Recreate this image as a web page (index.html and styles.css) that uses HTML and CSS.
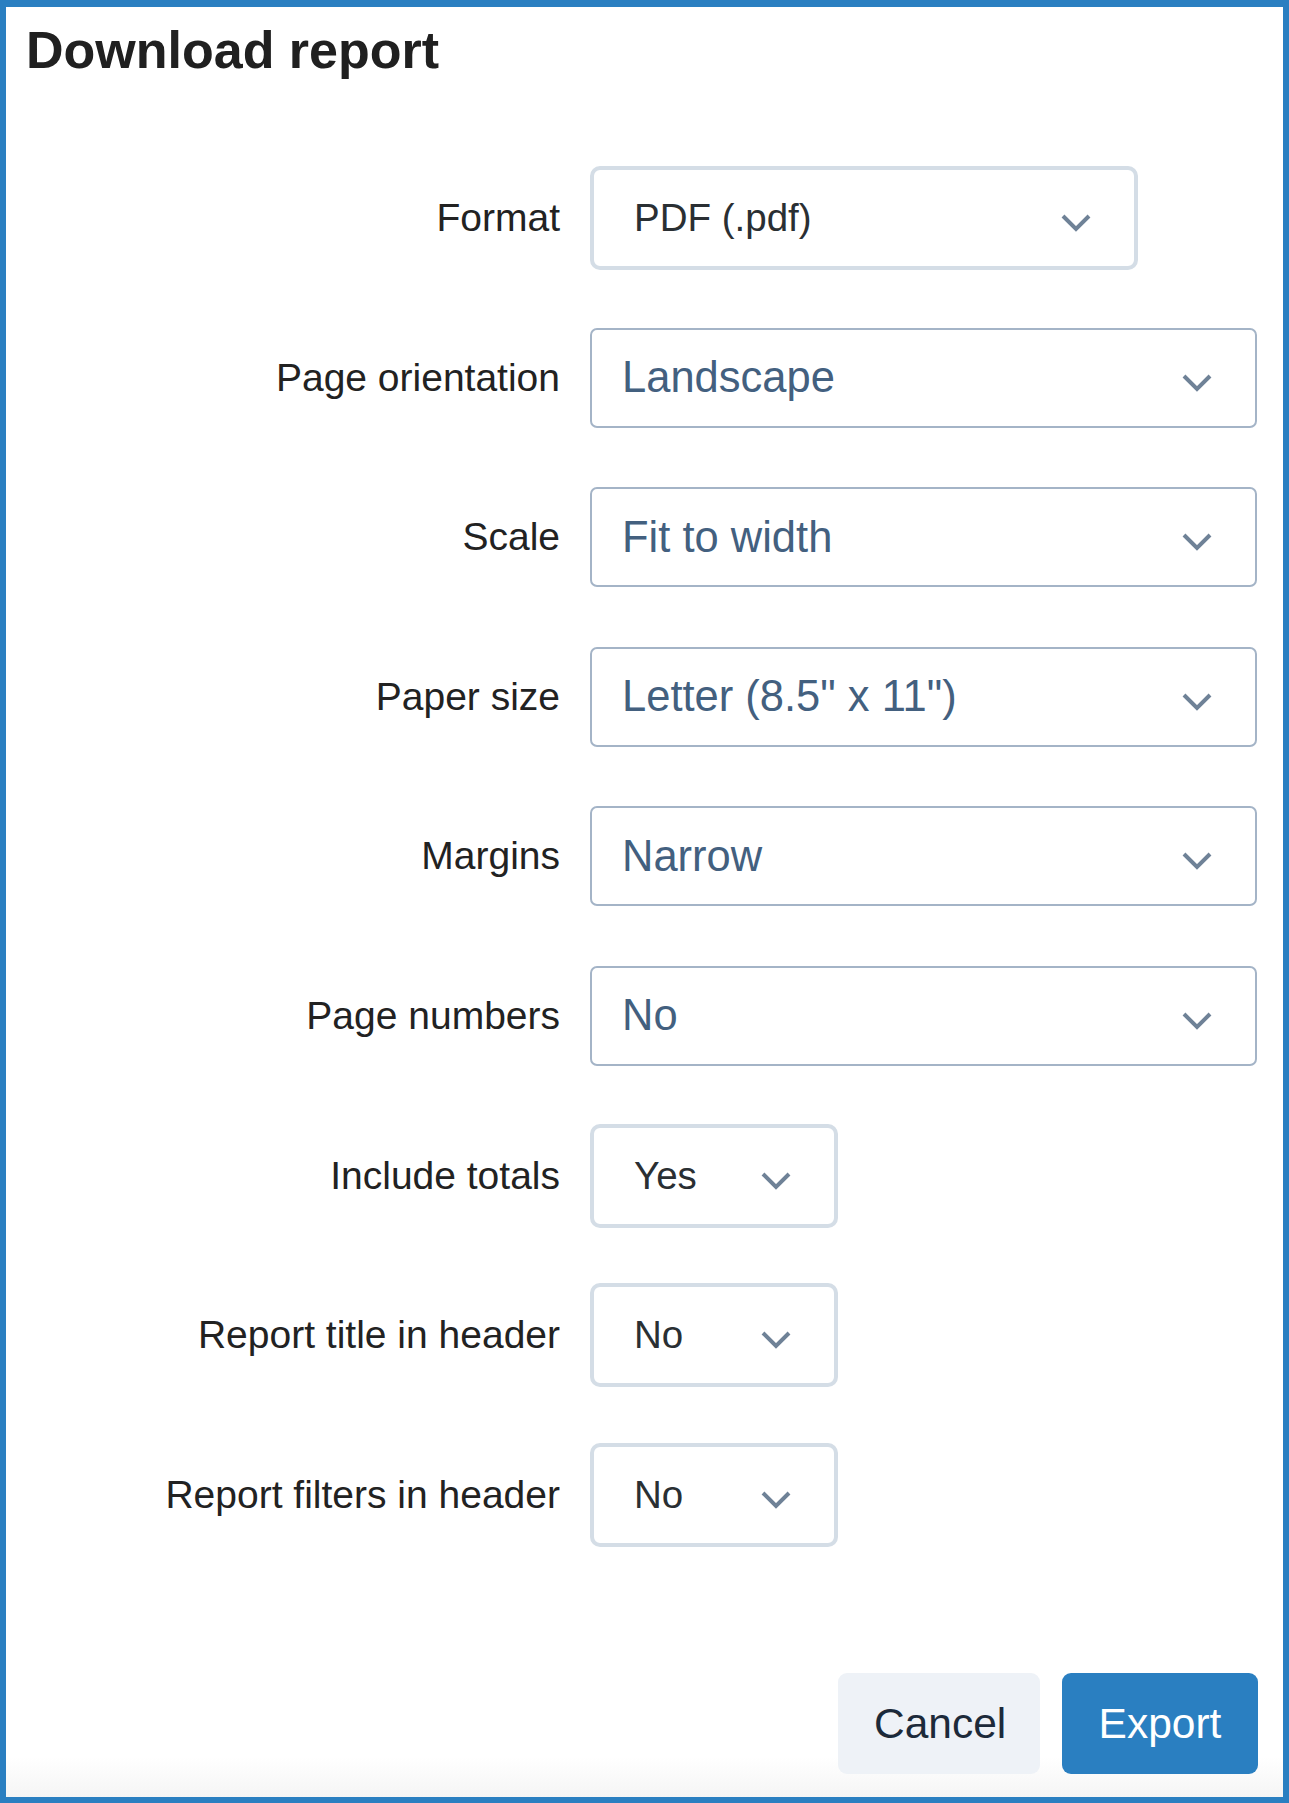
FILE: index.html
```html
<!DOCTYPE html>
<html lang="en">
<head>
    <meta charset="UTF-8">
    <meta name="viewport" content="width=device-width, initial-scale=1.0">
    <title>Download report</title>
    <link rel="stylesheet" href="styles.css">
</head>
<body>
    <div class="dialog">
        <h1 class="title">Download report</h1>
        <div class="form">
            <div class="label">Format</div>
            <div class="select select-plain select-format"><span class="value">PDF (.pdf)</span><svg class="chevron" viewBox="0 0 30 20"><polyline points="2,3 15,16 28,3"/></svg></div>

            <div class="label">Page orientation</div>
            <div class="select select-wide"><span class="value">Landscape</span><svg class="chevron" viewBox="0 0 30 20"><polyline points="2,3 15,16 28,3"/></svg></div>

            <div class="label">Scale</div>
            <div class="select select-wide"><span class="value">Fit to width</span><svg class="chevron" viewBox="0 0 30 20"><polyline points="2,3 15,16 28,3"/></svg></div>

            <div class="label">Paper size</div>
            <div class="select select-wide"><span class="value">Letter (8.5" x 11")</span><svg class="chevron" viewBox="0 0 30 20"><polyline points="2,3 15,16 28,3"/></svg></div>

            <div class="label">Margins</div>
            <div class="select select-wide"><span class="value">Narrow</span><svg class="chevron" viewBox="0 0 30 20"><polyline points="2,3 15,16 28,3"/></svg></div>

            <div class="label">Page numbers</div>
            <div class="select select-wide"><span class="value">No</span><svg class="chevron" viewBox="0 0 30 20"><polyline points="2,3 15,16 28,3"/></svg></div>

            <div class="label">Include totals</div>
            <div class="select select-plain select-small"><span class="value">Yes</span><svg class="chevron" viewBox="0 0 30 20"><polyline points="2,3 15,16 28,3"/></svg></div>

            <div class="label">Report title in header</div>
            <div class="select select-plain select-small"><span class="value">No</span><svg class="chevron" viewBox="0 0 30 20"><polyline points="2,3 15,16 28,3"/></svg></div>

            <div class="label">Report filters in header</div>
            <div class="select select-plain select-small"><span class="value">No</span><svg class="chevron" viewBox="0 0 30 20"><polyline points="2,3 15,16 28,3"/></svg></div>
        </div>
        <div class="footer">
            <button class="btn btn-cancel">Cancel</button>
            <button class="btn btn-export">Export</button>
        </div>
    </div>
</body>
</html>
```

FILE: styles.css
```css
html, body { margin: 0; padding: 0; }
body { font-family: 'Liberation Sans', Arial, sans-serif; color: #222; background: #fff; }

.dialog { box-sizing: border-box; width: 1289px; height: 1803px; border: 6px solid #2a7fc1; border-top-width: 7px; display: flex; flex-direction: column; background: linear-gradient(#fff calc(100% - 40px), #f5f5f5); }

.title { margin: 0; padding: 13px 0 0 20px; font-size: 52px; line-height: 60px; font-weight: bold; color: #202020; }

.form { margin-top: 86px; display: grid; grid-template-columns: 554px auto; grid-auto-rows: 104px; column-gap: 30px; row-gap: 55.6px; padding-right: 26px; align-items: center; }
.label { font-size: 39px; text-align: right; color: #222; }

.select { box-sizing: border-box; display: flex; align-items: center; justify-content: space-between; background: #fff; }
.select .value { white-space: nowrap; }
.chevron { width: 30px; height: 20px; margin-top: 10px; flex: none; }
.chevron polyline { fill: none; stroke: #6f8297; stroke-width: 4; }

.select-plain { height: 104px; border: 4px solid #d4dde6; border-radius: 10px; padding: 0 43px 0 40px; font-size: 38.5px; color: #2a2f33; }
.select-format { width: 548px; }
.select-small { width: 248px; }
.select-wide { height: 100px; border: 2px solid #a4b4c7; border-radius: 7px; padding: 0 43px 0 30px; font-size: 43.5px; color: #43607f; }

.footer { margin-top: auto; display: flex; justify-content: flex-end; gap: 22px; padding: 0 25px 23px 0; }
.btn { font-family: 'Liberation Sans', Arial, sans-serif; font-size: 42.5px; height: 101px; padding: 0 36px; border: none; border-radius: 9px; cursor: pointer; }
.btn-cancel { background: #eef2f7; color: #1c2a3a; width: 202px; }
.btn-export { background: #2a7fc1; color: #fff; width: 196px; }
```
